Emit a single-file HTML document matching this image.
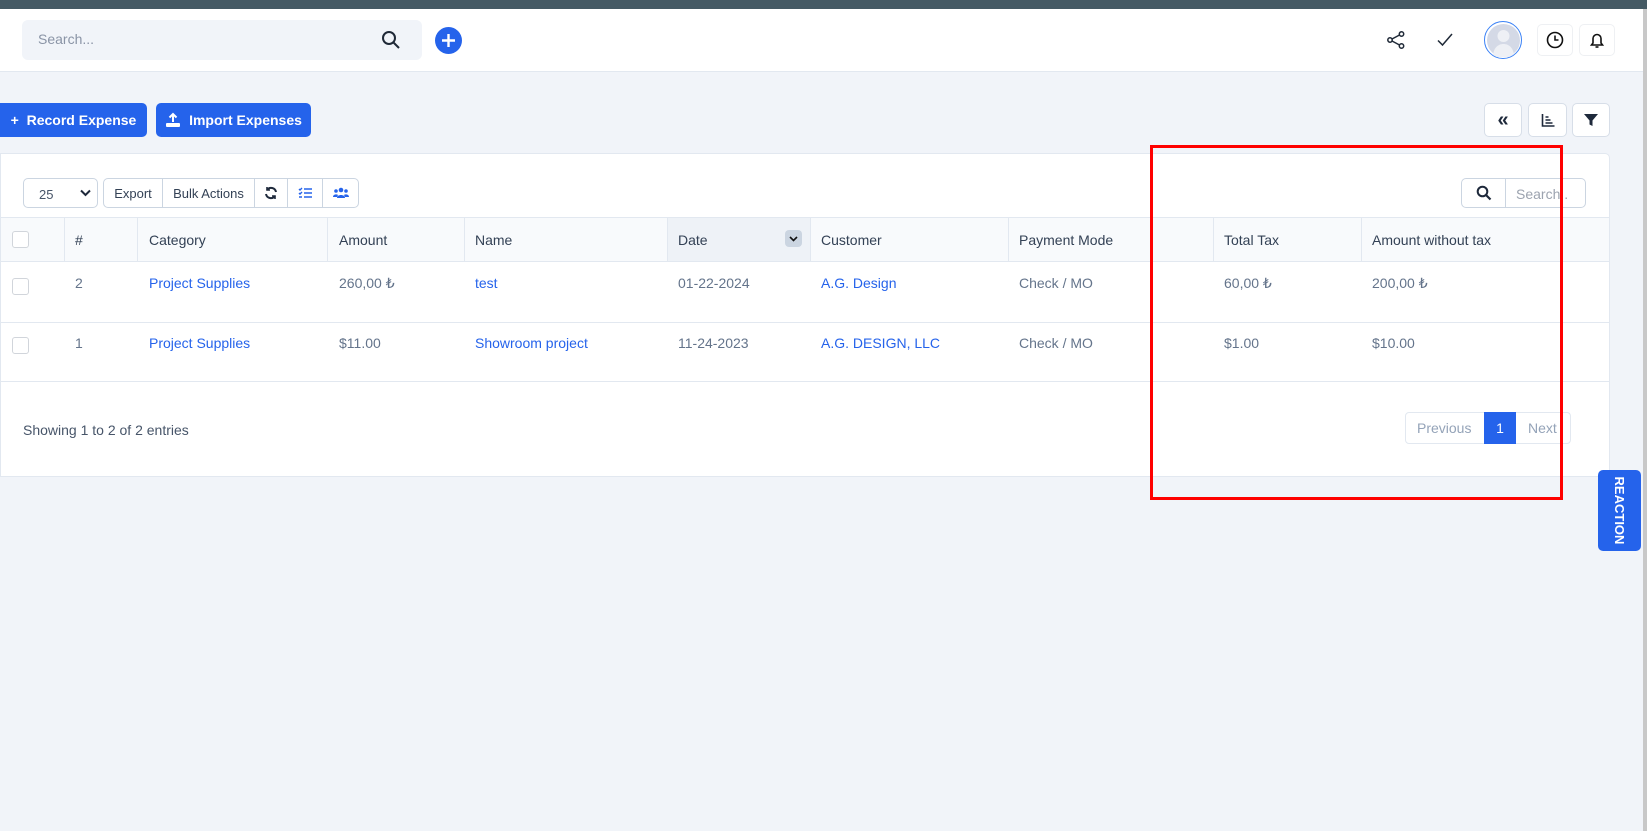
<!DOCTYPE html>
<html><head><style>
*{box-sizing:border-box;margin:0;padding:0}
body{width:1647px;height:831px;background:#f1f4f9;font-family:"Liberation Sans",sans-serif;position:relative;overflow:hidden;color:#64748b;font-size:14px}
.abs{position:absolute}
.top{left:0;top:0;width:1647px;height:9px;background:#455a64}
.hdr{left:0;top:9px;width:1643px;height:63px;background:#fff;border-bottom:1px solid #e2e8f0}
.sb{left:1643px;top:9px;width:4px;height:822px;background:#c8c8c8}
.btn{background:#2563eb;color:#fff;font-weight:600;border-radius:5px;display:flex;align-items:center;justify-content:center;font-size:14px}
.wb{background:#fff;border:1px solid #d7dee8;border-radius:5px;display:flex;align-items:center;justify-content:center}
.card{left:0;top:153px;width:1610px;height:324px;background:#fff;border:1px solid #e2e8f0;border-radius:0 5px 5px 0}
.tb{border:1px solid #cbd5e1;height:30px;top:178px;display:flex;align-items:center;justify-content:center;font-size:13px;color:#334155;background:#fff}
.th{top:217px;height:45px;background:#f8fafc;border-top:1px solid #e2e8f0;border-bottom:1px solid #e2e8f0;left:1px;width:1608px}
.c{position:absolute;font-size:14px}
.lnk{color:#2563eb}
.vl{position:absolute;top:217px;height:45px;width:1px;background:#e2e8f0}
.cb{position:absolute;left:12px;width:17px;height:17px;border:1px solid #d1d5db;border-radius:3px;background:#fff}
</style></head><body>
<div class="abs top"></div>
<div class="abs hdr"></div>
<div class="abs sb"></div>
<div class="abs" style="left:22px;top:20px;width:400px;height:40px;background:#f1f4f9;border-radius:6px"></div>
<div class="abs" style="left:38px;top:31px;color:#8a94a6;font-size:14px">Search...</div>
<svg class="abs" style="left:381px;top:30px" width="20" height="20" viewBox="0 0 20 20"><circle cx="8" cy="8" r="6" fill="none" stroke="#1f2937" stroke-width="2"/><path d="M12.5 12.5L18 18" stroke="#1f2937" stroke-width="2"/></svg>
<svg class="abs" style="left:435px;top:27px" width="27" height="27" viewBox="0 0 27 27"><circle cx="13.5" cy="13.5" r="13.5" fill="#2563eb"/><path d="M13.5 7v13M7 13.5h13" stroke="#fff" stroke-width="2.4"/></svg>
<svg class="abs" style="left:1386px;top:30px" width="20" height="20" viewBox="0 0 20 20" fill="none" stroke="#1f2937" stroke-width="1.5"><circle cx="4" cy="10" r="2.2"/><circle cx="15.5" cy="4" r="2.2"/><circle cx="15.5" cy="16" r="2.2"/><path d="M6 9l7.5-4M6 11l7.5 4"/></svg>
<svg class="abs" style="left:1436px;top:31px" width="18" height="18" viewBox="0 0 18 18"><path d="M2 9.5l4.5 4.5L16 3" fill="none" stroke="#1f2937" stroke-width="1.5"/></svg>
<div class="abs" style="left:1484px;top:21px;width:38px;height:38px;border-radius:50%;border:1.5px solid #3b82f6;background:#fff;overflow:hidden;padding:2px"><svg width="33" height="33" viewBox="0 0 33 33"><circle cx="16.5" cy="16.5" r="16.5" fill="#d4d9e6"/><circle cx="16.5" cy="12" r="6" fill="#eef0f5"/><path d="M6 33c0-9 5-13 10.5-13S27 24 27 33z" fill="#eef0f5"/></svg></div>
<div class="abs wb" style="left:1537px;top:24px;width:36px;height:32px;border-color:#eef0f3"><svg width="20" height="20" viewBox="0 0 20 20" fill="none" stroke="#111" stroke-width="1.6"><circle cx="10" cy="10" r="7.5"/><path d="M10 5.5V10h3.5"/></svg></div>
<div class="abs wb" style="left:1579px;top:24px;width:36px;height:32px;border-color:#eef0f3"><svg width="20" height="20" viewBox="0 0 20 20" fill="none" stroke="#111" stroke-width="1.6"><path d="M4.5 15h11l-1.5-2V8.5a4 4 0 0 0-8 0V13z"/><path d="M8.5 17h3"/></svg></div>

<div class="abs btn" style="left:0;top:103px;width:147px;height:34px;border-radius:0 5px 5px 0">+&nbsp; Record Expense</div>
<div class="abs btn" style="left:156px;top:103px;width:155px;height:34px"><svg width="16" height="16" viewBox="0 0 16 16" style="margin-right:8px"><path d="M8 2v8M4.5 5.5L8 2l3.5 3.5" stroke="#fff" stroke-width="2" fill="none"/><rect x="1" y="11" width="14" height="4" rx="1" fill="#fff"/></svg>Import Expenses</div>
<div class="abs wb" style="left:1484px;top:103px;width:38px;height:34px;color:#1e293b;font-size:20px;font-weight:bold">«</div>
<div class="abs wb" style="left:1528px;top:103px;width:39px;height:34px"><svg width="14" height="14" viewBox="0 0 14 14" fill="none" stroke="#1e293b" stroke-width="1.6"><path d="M1.5 1v12h12M4.5 4h3M4.5 7h5M4.5 10h7"/></svg></div>
<div class="abs wb" style="left:1572px;top:103px;width:38px;height:34px"><svg width="14" height="14" viewBox="0 0 14 14"><path d="M0 1h14L8.5 7.5V13l-3-1.5V7.5z" fill="#1e293b"/></svg></div>

<div class="abs card"></div>
<div class="abs" style="left:23px;top:178px;width:75px;height:30px;border:1px solid #cbd5e1;border-radius:5px;font-size:13px;padding:8px 0 0 15px;color:#475569">25<svg class="abs" style="left:56px;top:10px" width="11" height="8" viewBox="0 0 11 8"><path d="M1 1.5l4.5 4.5L10 1.5" stroke="#1e293b" stroke-width="2" fill="none"/></svg></div>
<div class="abs tb" style="left:103px;width:60px;border-radius:5px 0 0 5px">Export</div>
<div class="abs tb" style="left:162px;width:93px">Bulk Actions</div>
<div class="abs tb" style="left:254px;width:34px"><svg width="14" height="14" viewBox="0 0 14 14" fill="none" stroke="#1e293b" stroke-width="2"><path d="M12 6A5 5 0 0 0 3 4M2 8a5 5 0 0 0 9 2"/><path d="M3 1v3h3M11 13v-3H8" stroke-width="1.6"/></svg></div>
<div class="abs tb" style="left:287px;width:36px"><svg width="14" height="12" viewBox="0 0 14 12" stroke="#2563eb" stroke-width="1.4" fill="none"><path d="M1 2l1 1 2-2M6 2h8M1 6l1 1 2-2M6 6h8M6 10h8M1 10h3"/></svg></div>
<div class="abs tb" style="left:322px;width:37px;border-radius:0 5px 5px 0"><svg width="16" height="12" viewBox="0 0 16 12" fill="#2563eb"><circle cx="8" cy="3" r="2.3"/><circle cx="3" cy="4" r="1.8"/><circle cx="13" cy="4" r="1.8"/><path d="M4 11c0-4 8-4 8 0zM0 10c0-3 4-3 5-2l-1 2zM16 10c0-3-4-3-5-2l1 2z"/></svg></div>
<div class="abs" style="left:1461px;top:178px;width:125px;height:30px;border:1px solid #cbd5e1;border-radius:5px"></div>
<div class="abs" style="left:1505px;top:178px;width:1px;height:30px;background:#cbd5e1"></div>
<svg class="abs" style="left:1476px;top:185px" width="16" height="16" viewBox="0 0 16 16"><circle cx="6.5" cy="6.5" r="4.8" fill="none" stroke="#1e293b" stroke-width="2"/><path d="M10 10l4.5 4.5" stroke="#1e293b" stroke-width="2.2"/></svg>
<div class="abs" style="left:1516px;top:186px;color:#9ca3af;font-size:14px">Search..</div>

<div class="abs th"></div>
<div class="abs" style="left:667px;top:218px;width:143px;height:43px;background:#eef2f7"></div>
<div class="vl" style="left:64px"></div><div class="vl" style="left:137px"></div><div class="vl" style="left:327px"></div><div class="vl" style="left:464px"></div><div class="vl" style="left:667px"></div><div class="vl" style="left:810px"></div><div class="vl" style="left:1008px"></div><div class="vl" style="left:1213px"></div><div class="vl" style="left:1361px"></div>
<div class="cb" style="top:231px"></div>
<div class="abs" style="left:785px;top:230px;width:17px;height:17px;border-radius:4px;background:#cbd5e1"><svg width="17" height="17" viewBox="0 0 17 17"><path d="M5 7l3.5 3.5L12 7" stroke="#111" stroke-width="1.6" fill="none"/></svg></div>
<div class="c" style="top:232px;left:75px;color:#334155">#</div>
<div class="c" style="top:232px;left:149px;color:#334155">Category</div>
<div class="c" style="top:232px;left:339px;color:#334155">Amount</div>
<div class="c" style="top:232px;left:475px;color:#334155">Name</div>
<div class="c" style="top:232px;left:678px;color:#334155">Date</div>
<div class="c" style="top:232px;left:821px;color:#334155">Customer</div>
<div class="c" style="top:232px;left:1019px;color:#334155">Payment Mode</div>
<div class="c" style="top:232px;left:1224px;color:#334155">Total Tax</div>
<div class="c" style="top:232px;left:1372px;color:#334155">Amount without tax</div>

<div class="cb" style="top:278px"></div>
<div class="c" style="top:275px;left:75px">2</div>
<div class="c lnk" style="top:275px;left:149px">Project Supplies</div>
<div class="c" style="top:275px;left:339px">260,00 ₺</div>
<div class="c lnk" style="top:275px;left:475px">test</div>
<div class="c" style="top:275px;left:678px">01-22-2024</div>
<div class="c lnk" style="top:275px;left:821px">A.G. Design</div>
<div class="c" style="top:275px;left:1019px">Check / MO</div>
<div class="c" style="top:275px;left:1224px">60,00 ₺</div>
<div class="c" style="top:275px;left:1372px">200,00 ₺</div>
<div class="abs" style="left:1px;top:322px;width:1608px;height:1px;background:#e2e8f0"></div>

<div class="cb" style="top:337px"></div>
<div class="c" style="top:335px;left:75px">1</div>
<div class="c lnk" style="top:335px;left:149px">Project Supplies</div>
<div class="c" style="top:335px;left:339px">$11.00</div>
<div class="c lnk" style="top:335px;left:475px">Showroom project</div>
<div class="c" style="top:335px;left:678px">11-24-2023</div>
<div class="c lnk" style="top:335px;left:821px">A.G. DESIGN, LLC</div>
<div class="c" style="top:335px;left:1019px">Check / MO</div>
<div class="c" style="top:335px;left:1224px">$1.00</div>
<div class="c" style="top:335px;left:1372px">$10.00</div>
<div class="abs" style="left:1px;top:381px;width:1608px;height:1px;background:#e2e8f0"></div>

<div class="c" style="top:422px;left:23px;color:#475569">Showing 1 to 2 of 2 entries</div>
<div class="abs" style="left:1405px;top:412px;width:166px;height:32px;border:1px solid #e2e8f0;border-radius:4px"></div>
<div class="c" style="top:420px;left:1417px;color:#94a3b8">Previous</div>
<div class="abs" style="left:1484px;top:412px;width:32px;height:32px;background:#2563eb;color:#fff;display:flex;align-items:center;justify-content:center">1</div>
<div class="c" style="top:420px;left:1528px;color:#94a3b8">Next</div>

<div class="abs" style="left:1150px;top:145px;width:413px;height:355px;border:3px solid #ff0000"></div>
<div class="abs" style="left:1598px;top:470px;width:43px;height:81px;background:#2563eb;border-radius:5px"></div>
<div class="abs" style="transform:rotate(90deg);transform-origin:0 0;left:1629px;top:470px;width:81px;height:20px;color:#fff;font-weight:bold;font-size:13px;text-align:center;line-height:20px">REACTION</div>
</body></html>
